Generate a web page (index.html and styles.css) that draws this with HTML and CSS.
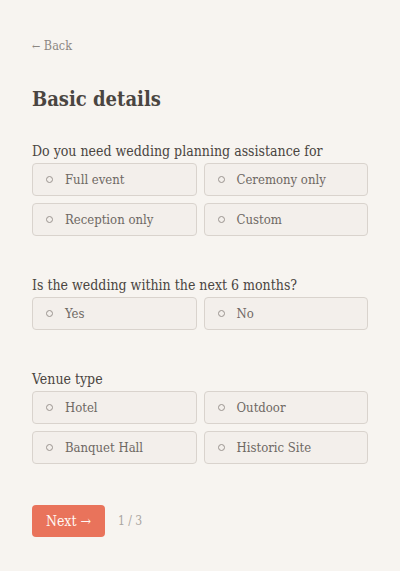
FILE: index.html
```html
<!DOCTYPE html>
<html>
<head>
<meta charset="utf-8">
<link rel="stylesheet" href="styles.css">
</head>
<body>
<div class="page">
  <a class="back" href="#"><span class="arrow">&larr;</span> Back</a>
  <h1 class="title">Basic details</h1>

  <section class="question">
    <div class="label">Do you need wedding planning assistance for</div>
    <div class="options">
      <div class="option"><span class="radio"></span>Full event</div>
      <div class="option"><span class="radio"></span>Ceremony only</div>
      <div class="option"><span class="radio"></span>Reception only</div>
      <div class="option"><span class="radio"></span>Custom</div>
    </div>
  </section>

  <section class="question">
    <div class="label">Is the wedding within the next 6 months?</div>
    <div class="options">
      <div class="option"><span class="radio"></span>Yes</div>
      <div class="option"><span class="radio"></span>No</div>
    </div>
  </section>

  <section class="question">
    <div class="label">Venue type</div>
    <div class="options">
      <div class="option"><span class="radio"></span>Hotel</div>
      <div class="option"><span class="radio"></span>Outdoor</div>
      <div class="option"><span class="radio"></span>Banquet Hall</div>
      <div class="option"><span class="radio"></span>Historic Site</div>
    </div>
  </section>

  <div class="footer">
    <button class="next">Next <span class="next-arrow">&rarr;</span></button>
    <span class="step">1 / 3</span>
  </div>
</div>
</body>
</html>
```

FILE: styles.css
```css
html, body {
  margin: 0;
  padding: 0;
  background: #f7f4f0;
}
body {
  font-family: "DejaVu Serif", "Liberation Serif", serif;
  font-stretch: condensed;
  color: #4a4541;
}
.page {
  padding: 36px 32px 0 32px;
}
.back {
  display: block;
  font-size: 12.5px;
  line-height: 20px;
  color: #8c8782;
  text-decoration: none;
}
.arrow {
  font-size: 11px;
}
.title {
  margin: 28px 0 0 0;
  font-size: 20px;
  line-height: 28px;
  font-weight: bold;
  color: #4a4541;
}
.question {
  margin-top: 28px;
}
.question + .question {
  margin-top: 39px;
}
.label {
  font-size: 14px;
  line-height: 20px;
  color: #4a4541;
  margin-bottom: 2px;
}
.options {
  display: grid;
  grid-template-columns: 1fr 1fr;
  gap: 7px;
}
.option {
  display: flex;
  align-items: center;
  height: 31px;
  border: 1px solid #d9d3cd;
  border-radius: 4px;
  background: #f3efeb;
  font-size: 13px;
  color: #6e6863;
  padding-left: 13px;
}
.radio {
  width: 5px;
  height: 5px;
  border: 1px solid #9a948f;
  border-radius: 50%;
  margin-right: 12px;
}
.footer {
  display: flex;
  align-items: center;
  margin-top: 41px;
}
.next {
  width: 73px;
  height: 32px;
  border: none;
  border-radius: 4px;
  background: #e9735b;
  color: #fff8f3;
  font-family: inherit;
  font-stretch: condensed;
  font-size: 14px;
  padding: 0;
}
.step {
  margin-left: 13px;
  font-size: 12px;
  color: #aaa5a0;
}
```
